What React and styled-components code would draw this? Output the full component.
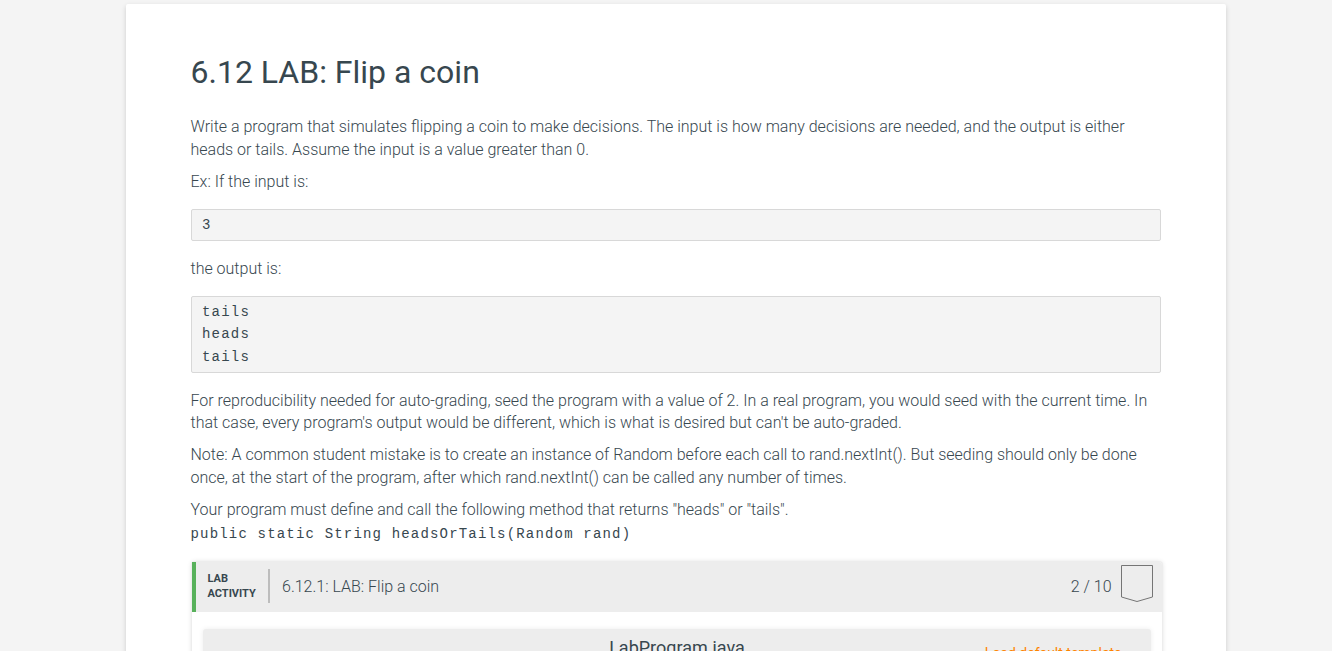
import styled, { createGlobalStyle } from "styled-components"

const GlobalStyle = createGlobalStyle`
    * {
        box-sizing: border-box;
    }
    body {
        margin: 0;
        overflow: hidden;
        background-color: #f4f4f4;
        color: #37474f;
        font-family: Roboto, "Liberation Sans", sans-serif;
        font-size: 16px;
        font-weight: 300;
        line-height: 22.4px;
    }
`
const Page = styled.div`
    height: 651px;
    padding: 4px 0 0 125.5px;
    overflow: hidden;
`
const Section = styled.main`
    width: 1100px;
    height: 900px;
    padding: 44.5px 65px 0;
    background-color: white;
    border-radius: 2px;
    box-shadow: 0 2px 5px 0 rgba(0, 0, 0, 0.16);
`
const Title = styled.h1`
    margin: 0 0 20px;
    font-size: 32px;
    font-weight: 400;
    line-height: 47.8px;
`
const Text = styled.p`
    margin: 0 0 10px;
`
const CodeBlock = styled.pre`
    margin: 15.5px 0 16.5px;
    padding: 4px 10.5px;
    background-color: #f4f4f4;
    border: 1px solid #d8d8d8;
    border-radius: 2px;
    font-family: "Liberation Mono", monospace;
    font-size: 14px;
    font-weight: 400;
    letter-spacing: 1.2px;
`
const Code = styled.code`
    font-family: "Liberation Mono", monospace;
    font-size: 14px;
    font-weight: 400;
    letter-spacing: 1.18px;
`
const Activity = styled.section`
    width: 970px;
    height: 400px;
    margin: 17.2px 0 0 1.5px;
    border-radius: 3px;
    box-shadow: 0 0 0 1px #ededed, 0 0 5px 0 rgba(0, 0, 0, 0.16);
`
const ActivityBar = styled.header`
    display: flex;
    align-items: center;
    height: 50px;
    padding: 0 9px 0 11.5px;
    background-color: #ededed;
    border-left: 4px solid #58b15b;
    border-radius: 0 3px 0 0;
`
const Kind = styled.div`
    width: 60.5px;
    margin-top: -2px;
    font-size: 11px;
    font-weight: 700;
    line-height: 15px;
`
const Divider = styled.div`
    width: 2px;
    height: 34px;
    margin: -2px 12px 0 0;
    background-color: #bdbdbd;
`
const ActivityTitle = styled.div`
    flex: 1;
`
const Score = styled.div`
    margin-right: 9.5px;
`
const Badge = styled.svg`
    display: block;
    width: 32px;
    height: 38px;
    margin-top: -6px;
`
const FileBar = styled.div`
    display: grid;
    grid-template-columns: 1fr auto 1fr;
    align-items: center;
    height: 38px;
    margin: 17px 11px 0;
    background-color: #ededed;
    border-radius: 3px 3px 0 0;
    box-shadow: 0 0 5px 0 rgba(0, 0, 0, 0.08);
`
const FileName = styled.div`
    grid-column: 2;
    font-size: 18px;
    font-weight: 400;
`
const LoadTemplate = styled.div`
    justify-self: end;
    margin: 9.5px 29.5px 0 0;
    color: #ff8400;
    font-size: 14px;
    font-weight: 400;
`

const App = () => {
  return (
    <Page>
        <GlobalStyle/>
        <Section>
            <Title>6.12 LAB: Flip a coin</Title>
            <Text>
                Write a program that simulates flipping a coin to make decisions. The input is how many decisions are needed, and the output is either heads or tails. Assume the input is a value greater than 0.
            </Text>
            <Text>Ex: If the input is:</Text>
            <CodeBlock>3</CodeBlock>
            <Text>the output is:</Text>
            <CodeBlock>{"tails\nheads\ntails"}</CodeBlock>
            <Text>
                For reproducibility needed for auto-grading, seed the program with a value of 2. In a real program, you would seed with the current time. In that case, every program's output would be different, which is what is desired but can't be auto-graded.
            </Text>
            <Text>
                Note: A common student mistake is to create an instance of Random before each call to rand.nextInt(). But seeding should only be done once, at the start of the program, after which rand.nextInt() can be called any number of times.
            </Text>
            <Text>
                Your program must define and call the following method that returns "heads" or "tails".<br/>
                <Code>public static String headsOrTails(Random rand)</Code>
            </Text>

            <Activity>
                <ActivityBar>
                    <Kind>LAB<br/>ACTIVITY</Kind>
                    <Divider/>
                    <ActivityTitle>6.12.1: LAB: Flip a coin</ActivityTitle>
                    <Score>2 / 10</Score>
                    <Badge viewBox="0 0 32 38">
                        <path d="M0.5 0.5H31.5V32L16 36.5L0.5 32Z" fill="none" stroke="#757575"/>
                    </Badge>
                </ActivityBar>
                <FileBar>
                    <FileName>LabProgram.java</FileName>
                    <LoadTemplate>Load default template</LoadTemplate>
                </FileBar>
            </Activity>
        </Section>
    </Page>
  )
}

export default App
